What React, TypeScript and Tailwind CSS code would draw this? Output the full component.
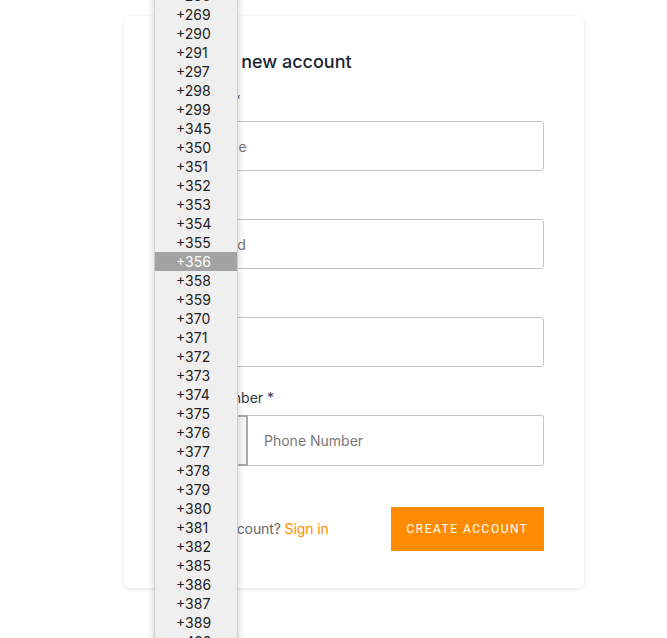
const codes = [
  "+268", "+269", "+290", "+291", "+297", "+298", "+299", "+345", "+350", "+351",
  "+352", "+353", "+354", "+355", "+356", "+358", "+359", "+370", "+371", "+372",
  "+373", "+374", "+375", "+376", "+377", "+378", "+379", "+380", "+381", "+382",
  "+385", "+386", "+387", "+389", "+420",
];

function Field({ label, placeholder }: { label: string; placeholder: string }) {
  return (
    <div className="flex flex-col">
      <label className="mb-[11px] text-sm leading-5 text-[#2d3748]">{label}</label>
      <input
        className="h-[50px] rounded-[3px] border border-[#c4c4c4] px-4 text-sm text-[#333] outline-none placeholder:text-[#777]"
        placeholder={placeholder}
      />
    </div>
  );
}

export default function App() {
  return (
    <div
      className="relative min-h-[638px] overflow-hidden bg-white pt-4"
      style={{ fontFamily: "Inter, 'Noto Sans', sans-serif" }}
    >
      <div className="ml-[124px] w-[460px] rounded-md bg-white px-10 pb-[37px] pt-8 shadow-[0_1px_4px_rgba(0,0,0,0.12)]">
        <h1 className="text-lg font-medium leading-7 text-[#1a2433]">Create a new account</h1>
        <div className="mt-[14px] flex flex-col gap-[17px]">
          <Field label="Full Name *" placeholder="Full Name" />
          <Field label="Password*" placeholder="Password" />
          <Field label="Email *" placeholder="Email" />
          <div className="mt-1 flex flex-col">
            <label className="mb-[7px] text-sm leading-5 text-[#2d3748]">Phone Number *</label>
            <div className="flex h-[51px]">
              <div className="w-[84px] rounded-l-[3px] border-2 border-[#a9a9a9] bg-[#f6f6f6]" />
              <input
                className="flex-1 rounded-r-[3px] border border-l-0 border-[#c4c4c4] px-4 text-sm outline-none placeholder:text-[#777]"
                placeholder="Phone Number"
              />
            </div>
          </div>
        </div>
        <div className="mt-[41px] flex items-center justify-between">
          <p className="text-sm tracking-[-0.1px] text-[#666]">
            Have an account? <span className="text-[#ff8c00]">Sign in</span>
          </p>
          <button
            className="h-[44px] w-[153px] bg-[#ff8c00] text-xs tracking-[1.5px] text-white"
            style={{ fontFamily: "Roboto, sans-serif" }}
          >
            CREATE ACCOUNT
          </button>
        </div>
      </div>

      <ul className="absolute left-[154px] top-[-14px] w-[84px] border-x border-[#cfcfcf] bg-[#efefef] shadow-[0_2px_8px_rgba(0,0,0,0.18)]">
        {codes.map((c) => (
          <li
            key={c}
            className={
              c === "+356"
                ? "h-[19px] bg-[#a3a3a3] pl-[21px] text-sm leading-[19px] text-white"
                : "h-[19px] pl-[21px] text-sm leading-[19px] text-[#222]"
            }
          >
            {c}
          </li>
        ))}
      </ul>
    </div>
  );
}
